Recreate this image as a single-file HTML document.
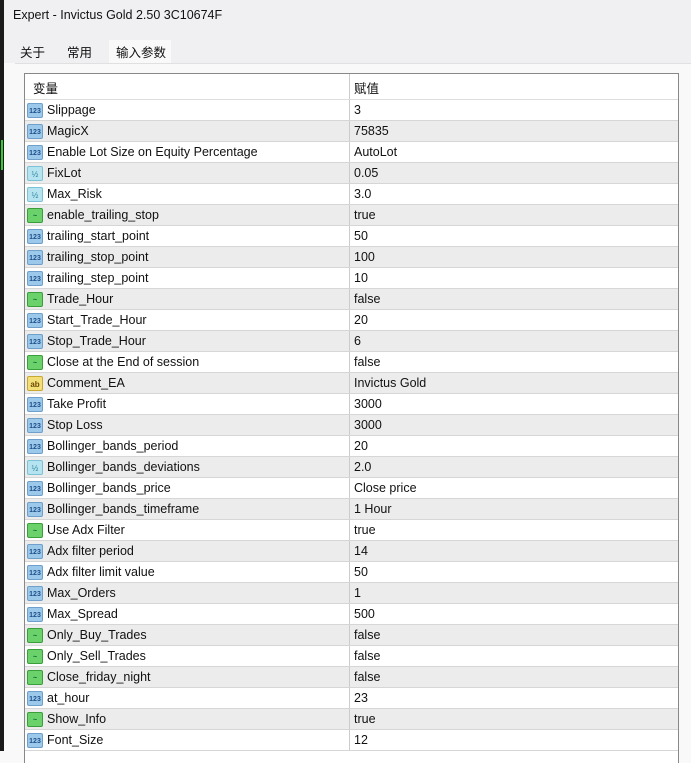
<!DOCTYPE html>
<html><head><meta charset="utf-8"><style>
*{margin:0;padding:0;box-sizing:border-box}
body{width:691px;height:751px;overflow:hidden;background:#f9f9f9;font-family:"Liberation Sans","Noto Sans CJK SC",sans-serif;font-size:12.5px;color:#111;position:relative}
.strip{position:absolute;left:0;top:0;width:4px;height:751px;background:#1a1a1a}
.strip i{position:absolute;left:1px;top:140px;width:2px;height:30px;background:#3c3}
.title{position:absolute;left:4px;top:0;right:0;height:63px;background:#f0f0f3}
.title span{position:absolute;left:9px;top:8px;font-size:12.5px}
.tab{position:absolute;top:40px;height:24px;font-size:12.5px;padding-top:2px}
.tabs-line{position:absolute;left:15px;right:0;top:63px;height:1px;background:#e0e0e0}
.table{position:absolute;left:24px;top:73px;width:655px;height:690px;border:1px solid #888;background:#fff;border-bottom:none}
.hd{height:26px;position:relative;border-bottom:1px solid #ddd}
.hd span{position:absolute;top:4px}
.row{height:21px;position:relative;border-bottom:1px solid #d6d6d6}
.row:nth-child(odd){background:#fff}
.row:nth-child(even){background:#ececec}
.row .n{position:absolute;left:22px;top:3px}
.row .v{position:absolute;left:329px;top:3px}
.row .sep,.hd .sep{position:absolute;left:324px;top:0;bottom:0;width:1px;background:#ccc}
.ic{position:absolute;left:2px;top:3px;width:16px;height:15px;border-radius:2px;font-size:7px;font-weight:bold;line-height:15px;text-align:center}
.i1{background:#9cc8ea;color:#1c4f8c;border:1px solid #6fa0cc}
.i2{background:#b5e4f0;color:#2b7f9b;border:1px solid #7cc2d6;font-weight:normal;font-size:8px}
.i3{background:#6bd26b;border:1px solid #3a9e3a;color:#063}
.i4{background:#f3df7a;border:1px solid #c9a830;color:#6a4a00;font-size:8px}
</style></head><body>
<div class="strip"><i></i></div>
<div class="title"><span>Expert - Invictus Gold 2.50 3C10674F</span></div>
<div class="tab" style="left:20px">关于</div>
<div class="tab" style="left:67px">常用</div>
<div class="tab" style="left:109px;width:62px;background:#f9f9f9;padding-left:7px">输入参数</div>
<div class="tabs-line"></div>
<div class="table">
<div class="hd"><span style="left:8px">变量</span><div class="sep"></div><span style="left:329px">赋值</span></div>
</div>
<div style="position:absolute;left:25px;top:100px;width:653px">
<div class="row"><span class="ic i1">123</span><span class="n">Slippage</span><div class="sep"></div><span class="v">3</span></div>
<div class="row"><span class="ic i1">123</span><span class="n">MagicX</span><div class="sep"></div><span class="v">75835</span></div>
<div class="row"><span class="ic i1">123</span><span class="n">Enable Lot Size on Equity Percentage</span><div class="sep"></div><span class="v">AutoLot</span></div>
<div class="row"><span class="ic i2">½</span><span class="n">FixLot</span><div class="sep"></div><span class="v">0.05</span></div>
<div class="row"><span class="ic i2">½</span><span class="n">Max_Risk</span><div class="sep"></div><span class="v">3.0</span></div>
<div class="row"><span class="ic i3">~</span><span class="n">enable_trailing_stop</span><div class="sep"></div><span class="v">true</span></div>
<div class="row"><span class="ic i1">123</span><span class="n">trailing_start_point</span><div class="sep"></div><span class="v">50</span></div>
<div class="row"><span class="ic i1">123</span><span class="n">trailing_stop_point</span><div class="sep"></div><span class="v">100</span></div>
<div class="row"><span class="ic i1">123</span><span class="n">trailing_step_point</span><div class="sep"></div><span class="v">10</span></div>
<div class="row"><span class="ic i3">~</span><span class="n">Trade_Hour</span><div class="sep"></div><span class="v">false</span></div>
<div class="row"><span class="ic i1">123</span><span class="n">Start_Trade_Hour</span><div class="sep"></div><span class="v">20</span></div>
<div class="row"><span class="ic i1">123</span><span class="n">Stop_Trade_Hour</span><div class="sep"></div><span class="v">6</span></div>
<div class="row"><span class="ic i3">~</span><span class="n">Close at the End of session</span><div class="sep"></div><span class="v">false</span></div>
<div class="row"><span class="ic i4">ab</span><span class="n">Comment_EA</span><div class="sep"></div><span class="v">Invictus Gold</span></div>
<div class="row"><span class="ic i1">123</span><span class="n">Take Profit</span><div class="sep"></div><span class="v">3000</span></div>
<div class="row"><span class="ic i1">123</span><span class="n">Stop Loss</span><div class="sep"></div><span class="v">3000</span></div>
<div class="row"><span class="ic i1">123</span><span class="n">Bollinger_bands_period</span><div class="sep"></div><span class="v">20</span></div>
<div class="row"><span class="ic i2">½</span><span class="n">Bollinger_bands_deviations</span><div class="sep"></div><span class="v">2.0</span></div>
<div class="row"><span class="ic i1">123</span><span class="n">Bollinger_bands_price</span><div class="sep"></div><span class="v">Close price</span></div>
<div class="row"><span class="ic i1">123</span><span class="n">Bollinger_bands_timeframe</span><div class="sep"></div><span class="v">1 Hour</span></div>
<div class="row"><span class="ic i3">~</span><span class="n">Use Adx Filter</span><div class="sep"></div><span class="v">true</span></div>
<div class="row"><span class="ic i1">123</span><span class="n">Adx filter period</span><div class="sep"></div><span class="v">14</span></div>
<div class="row"><span class="ic i1">123</span><span class="n">Adx filter limit value</span><div class="sep"></div><span class="v">50</span></div>
<div class="row"><span class="ic i1">123</span><span class="n">Max_Orders</span><div class="sep"></div><span class="v">1</span></div>
<div class="row"><span class="ic i1">123</span><span class="n">Max_Spread</span><div class="sep"></div><span class="v">500</span></div>
<div class="row"><span class="ic i3">~</span><span class="n">Only_Buy_Trades</span><div class="sep"></div><span class="v">false</span></div>
<div class="row"><span class="ic i3">~</span><span class="n">Only_Sell_Trades</span><div class="sep"></div><span class="v">false</span></div>
<div class="row"><span class="ic i3">~</span><span class="n">Close_friday_night</span><div class="sep"></div><span class="v">false</span></div>
<div class="row"><span class="ic i1">123</span><span class="n">at_hour</span><div class="sep"></div><span class="v">23</span></div>
<div class="row"><span class="ic i3">~</span><span class="n">Show_Info</span><div class="sep"></div><span class="v">true</span></div>
<div class="row"><span class="ic i1">123</span><span class="n">Font_Size</span><div class="sep"></div><span class="v">12</span></div>
</div>
</body></html>
